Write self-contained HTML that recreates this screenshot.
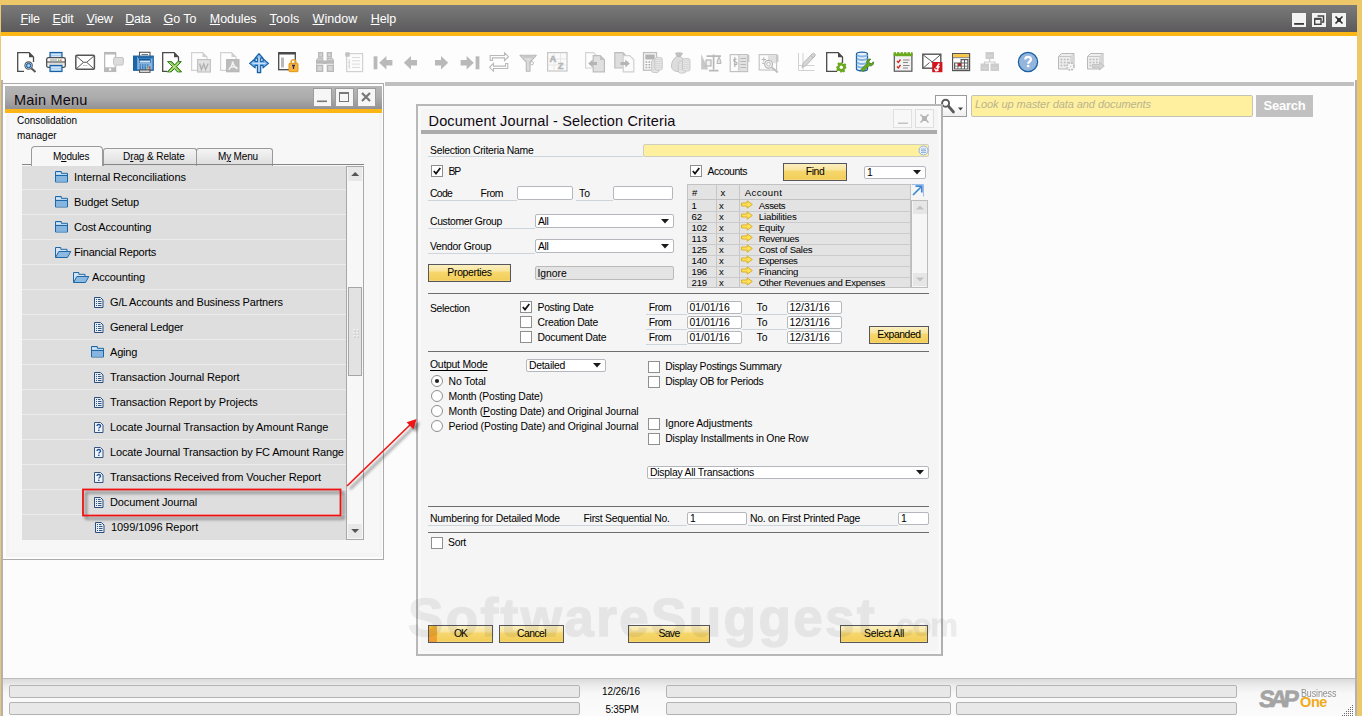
<!DOCTYPE html>
<html lang="en"><head><meta charset="utf-8"><title>SAP Business One - Document Journal</title>
<style>
html,body{margin:0;padding:0;}
body{width:1362px;height:716px;overflow:hidden;background:#fcfcfc;font-family:"Liberation Sans",sans-serif;}
#app{position:relative;width:1362px;height:716px;overflow:hidden;background:#fcfcfc;}
#app div,#app span.t,#app svg{position:absolute;box-sizing:border-box;}
span.t{white-space:nowrap;color:#000;}
u{text-decoration:underline;text-underline-offset:1px;}
.btn{border:1px solid #56565c;background:linear-gradient(#fbefc2 0%,#f9e59c 36%,#f6d76e 46%,#f3ce5a 92%,#f7dc84 100%);}
.inp{border:1px solid #b4b8bc;background:#fff;border-radius:2px;}
.cb{border:1px solid #8e8f8f;background:#fff;}
.rd{border:1px solid #8e8f8f;background:#fff;border-radius:50%;}
.sf{border:1px solid #b4b4b4;background:#e8e8e8;border-radius:2px;}
.ul{height:1px;background:#ccd4dc;}
.sep{height:1px;background:#6e6e6e;}

</style></head>
<body>
<div id="app">
<!-- application frame -->
<div style="left:0px;top:0px;width:1362px;height:716px;background:#edc768;"></div>
<div style="left:1px;top:5px;width:1356px;height:711px;background:#fcfcfc;"></div>
<div style="left:1px;top:5px;width:1356px;height:27px;background:linear-gradient(#7a7a7a 0%,#6c6c6c 45%,#5c5a5c 100%);"></div>
<div style="left:1px;top:32px;width:1356px;height:4px;background:#fdb714;"></div>
<span class="t" style="left:20.50px;top:11.00px;font-size:12.5px;line-height:16px;letter-spacing:-0.239px;color:#fff;"><u>F</u>ile</span>
<span class="t" style="left:52.50px;top:11.00px;font-size:12.5px;line-height:16px;letter-spacing:-0.137px;color:#fff;"><u>E</u>dit</span>
<span class="t" style="left:86.50px;top:11.00px;font-size:12.5px;line-height:16px;letter-spacing:-0.223px;color:#fff;"><u>V</u>iew</span>
<span class="t" style="left:125.30px;top:11.00px;font-size:12.5px;line-height:16px;letter-spacing:-0.255px;color:#fff;"><u>D</u>ata</span>
<span class="t" style="left:163.50px;top:11.00px;font-size:12.5px;line-height:16px;letter-spacing:-0.068px;color:#fff;"><u>G</u>o To</span>
<span class="t" style="left:209.80px;top:11.00px;font-size:12.5px;line-height:16px;letter-spacing:-0.081px;color:#fff;"><u>M</u>odules</span>
<span class="t" style="left:269.50px;top:11.00px;font-size:12.5px;line-height:16px;letter-spacing:0.163px;color:#fff;"><u>T</u>ools</span>
<span class="t" style="left:312.50px;top:11.00px;font-size:12.5px;line-height:16px;letter-spacing:0.086px;color:#fff;"><u>W</u>indow</span>
<span class="t" style="left:370.70px;top:11.00px;font-size:12.5px;line-height:16px;letter-spacing:-0.080px;color:#fff;"><u>H</u>elp</span>
<div style="left:1292px;top:13px;width:14px;height:14px;background:#f3f3f3;"><svg width="14" height="14" viewBox="0 0 14 14"><rect x="2.200" y="10" width="9.800" height="1.800" fill="#3a3a3a"/></svg></div>
<div style="left:1312px;top:13px;width:14px;height:14px;background:#f3f3f3;"><svg width="14" height="14" viewBox="0 0 14 14"><path d="M5.500 3h6v6h-1.800" fill="none" stroke="#444" stroke-width="1.500"/><rect x="2.700" y="5.800" width="6.300" height="5.500" fill="#f4f4f4" stroke="#444" stroke-width="1.400"/><path d="M2.700 5.800h6.300" stroke="#444" stroke-width="2"/></svg></div>
<div style="left:1332px;top:13px;width:14px;height:14px;background:#f3f3f3;"><svg width="14" height="14" viewBox="0 0 14 14"><path d="M3.500 3.500l7 7M10.500 3.500l-7 7" stroke="#333" stroke-width="1.700"/><rect x="5" y="5" width="4" height="4" fill="#333"/></svg></div>
<div style="left:1px;top:36px;width:1356px;height:46px;background:#fdfdfd;"></div>
<div style="left:385px;top:82px;width:969px;height:4px;background:#c0c0c0;"></div>
<div style="left:1355px;top:80px;width:2px;height:636px;background:#b2b2b6;"></div>
<div style="left:1px;top:80px;width:2.2px;height:636px;background:#b2b2b6;"></div>
<svg style="left:17px;top:51px" width="22" height="22" viewBox="0 0 22 22"><path d="M7 20.3H.7V1.7h11.5l4.3 4.3v5" fill="#fff" stroke="#4a4a4a" stroke-width="1.3"/><path d="M12 1.5l4.7 4.7h-4.7z" fill="#4a4a4a"/><path d="M14.3 17.3l4.2 3.6" stroke="#555" stroke-width="2"/><circle cx="11.6" cy="14.6" r="3.7" fill="#dbe9f8" stroke="#555" stroke-width="1.1"/><circle cx="11.6" cy="14.6" r="2.3" fill="#5b9bd8" stroke="#1a5fa8" stroke-width="1"/><rect x="10.6" y="13.6" width="2" height="2" fill="#cfe2f5"/></svg>
<svg style="left:46px;top:51px" width="22" height="22" viewBox="0 0 22 22"><rect x="4" y="1.5" width="12" height="6" fill="#a9cdee" stroke="#1b62a4" stroke-width="1.2"/><path d="M5.5 3.5h9M5.5 5.5h9" stroke="#d5e6f6"/><rect x=".7" y="6.7" width="18.6" height="9.6" rx="1.5" fill="#fbfbfb" stroke="#4d4d4d" stroke-width="1.3"/><path d="M1 11h18" stroke="#555" stroke-width="1.2"/><path d="M4 9h7" stroke="#999"/><rect x="12" y="8.5" width="1.3" height="1.3" fill="#4caf2a"/><rect x="14.2" y="8.5" width="1.3" height="1.3" fill="#e53222"/><path d="M2.5 13h15" stroke="#bbb"/><rect x="4" y="14.5" width="12" height="6" fill="#a9cdee" stroke="#1b62a4" stroke-width="1.2"/><path d="M5.5 16.5h9M5.5 18.5h9" stroke="#d5e6f6"/></svg>
<svg style="left:75px;top:51px" width="22" height="22" viewBox="0 0 22 22"><rect x=".8" y="4.3" width="18.6" height="14" rx="1" fill="#fff" stroke="#555" stroke-width="1.5"/><path d="M1.3 5l7.2 6.3h3.2L18.9 5M1.3 17.8l7.2-6.5M18.9 17.8l-7.2-6.5" fill="none" stroke="#555" stroke-width="1"/><path d="M8 14.5h4.5" stroke="#ccc"/></svg>
<svg style="left:104px;top:51px" width="22" height="22" viewBox="0 0 22 22"><rect x=".6" y="1.6" width="11" height="18.8" fill="#fff" stroke="#b9b9b9" stroke-width="1.3"/><rect x=".6" y="1.2" width="11" height="2.3" fill="#b9b9b9"/><rect x=".6" y="16.3" width="11" height="4.2" fill="#b9b9b9"/><rect x="5" y="17.5" width="2.2" height="2" fill="#fff"/><rect x="9.6" y="6.5" width="9.8" height="7.6" rx="1.5" fill="#dcdcdc" stroke="#c4c4c4" stroke-width="1"/><path d="M10 13.5v3.2l3-3" fill="#dcdcdc"/></svg>
<svg style="left:133px;top:51px" width="22" height="22" viewBox="0 0 22 22"><rect x="6.5" y="1.3" width="10.5" height="5" fill="#fff" stroke="#555" stroke-width="1.1"/><path d="M8.5 3.5h6.5" stroke="#777"/><rect x=".6" y="5.2" width="19.6" height="14" fill="#86b4e0" stroke="#19609f" stroke-width="1.3"/><rect x=".6" y="5.2" width="3.6" height="14" fill="#1f66a6"/><rect x="5" y="5.8" width="14.6" height="1.6" fill="#1f66a6"/><rect x="6" y="7.6" width="11.6" height="4.4" fill="#135a9c"/><rect x="6.6" y="9.6" width="10.4" height="2" fill="#d8e8f8"/><path d="M6.5 14h1.4M9 14h1.4M11.5 14h1.4M14 14h1.4M6.5 16.2h1.4M9 16.2h1.4M11.5 16.2h1.4M6.5 18.2h1.4M9 18.2h1.4M11.5 18.2h1.4" stroke="#1a5da0" stroke-width="1.2"/><rect x="14" y="15.6" width="1.4" height="1.3" fill="#56b02c"/><rect x="16" y="15.6" width="1.4" height="1.3" fill="#e42a1c"/><rect x="16" y="17.6" width="1.4" height="1.3" fill="#e42a1c"/><rect x="14" y="17.6" width="1.4" height="1.3" fill="#f2c230"/><rect x="6.5" y="19" width="10.5" height="2.3" fill="#fff" stroke="#555" stroke-width="1.1"/></svg>
<svg style="left:162px;top:51px" width="22" height="22" viewBox="0 0 22 22"><path d="M5 20.3H.7V1.7h11.5l4.3 4.3v4" fill="#fff" stroke="#4a4a4a" stroke-width="1.3"/><path d="M12 1.5l4.7 4.7h-4.7z" fill="#4a4a4a"/><path d="M5.5 10.6h4.2l3 3.3 3-3.3h3.6l-4.7 5 5 5.3h-4.2l-3-3.4-3.2 3.4H5.3l5.2-5.4z" fill="#7fbf3f" stroke="#2f7d1e" stroke-width="1"/><path d="M7.5 11.5l9.5 9M17 11.5l-9.5 9" stroke="#d8efb8" stroke-width=".9"/></svg>
<svg style="left:191px;top:51px" width="22" height="22" viewBox="0 0 22 22"><path d="M.6 1.6h11l4.4 4.4v13.4H.6z" fill="#fdfdfd" stroke="#d2d2d2" stroke-width="1.2"/><path d="M11.5 1.5l4.6 4.6h-4.6z" fill="#cfcfcf"/><rect x="6.6" y="8.6" width="12.8" height="12.4" fill="#e3e3e3" stroke="#c3c3c3" stroke-width="1.2"/><path d="M8.6 12.5l1.8 6 2.4-5.5 1.8 5.5 2.6-6" fill="none" stroke="#b3b3b3" stroke-width="1.5"/></svg>
<svg style="left:220px;top:51px" width="22" height="22" viewBox="0 0 22 22"><path d="M.6 1.6h11l4.4 4.4v13.4H.6z" fill="#fdfdfd" stroke="#d2d2d2" stroke-width="1.2"/><path d="M11.5 1.5l4.6 4.6h-4.6z" fill="#cfcfcf"/><rect x="6.6" y="8.6" width="12.4" height="12.2" fill="#bcbcbc" stroke="#b4b4b4" stroke-width="1"/><path d="M12.6 10.5c.8 3.5 2 6 5 7.4M12.6 10.5c-.3 3.6-1.6 6.4-4 8.2M9.5 16.6c2.600-1 5.500-1 7.800.2" fill="none" stroke="#f3f3f3" stroke-width="1.4"/></svg>
<svg style="left:249px;top:51.5px" width="22" height="22" viewBox="0 0 22 22"><path d="M10 1.6l4 4.6h-2.300v3.300h2.300V6.800l5.500 4.600-5.500 4.500v-2.600h-2.300v7.300H8.400v-7.300H6.100v2.600L.6 11.400l5.500-4.600v2.700h2.300V6.200H6z" fill="#7db5e8" stroke="#1660a8" stroke-width="1.2" stroke-linejoin="round"/><path d="M10 4.500v15M3.500 11.400h13" stroke="#cfe4f8" stroke-width="1"/></svg>
<svg style="left:278px;top:51px" width="22" height="22" viewBox="0 0 22 22"><rect x=".7" y="1.700" width="16.600" height="17" fill="#fff" stroke="#4a4a4a" stroke-width="1.300"/><rect x=".7" y="1.100" width="16.600" height="2.400" fill="#4a4a4a"/><rect x="3" y="6.500" width="3" height="10" fill="#b9b9b9"/><path d="M13.200 12.500v-2c0-2.400 4.600-2.400 4.600 0v2" fill="none" stroke="#e8a020" stroke-width="1.500"/><rect x="11" y="12.300" width="9" height="8.400" rx=".8" fill="#f6b53c" stroke="#e29512" stroke-width="1"/><path d="M14 14.500h3M15.500 14.500v3.500" stroke="#2a2a6a" stroke-width="1.300"/></svg>
<svg style="left:315px;top:51px" width="22" height="22" viewBox="0 0 22 22"><path d="M3 1h5.300v5.500h-5.300zM11.700 1h5.300v5.500h-5.300z" fill="#b9b9b9"/><path d="M4.300 2.300h2.700v3h-2.700zM13 2.300h2.700v3h-2.700z" fill="#d2d2d2"/><path d="M1 21v-12l2-2.500h5.300v3h3.400v-3h5.300l2 2.500v12h-7.300v-8h-3.400v8z" fill="#b9b9b9"/><path d="M1.500 13.300h6.500M12 13.300h6.500" stroke="#f2f2f2" stroke-width="1.100"/><path d="M2.500 15h4.300v4.700h-4.300zM13.200 15h4.300v4.700h-4.300z" fill="#d6d6d6"/><path d="M2.300 8.500h5M12.700 8.500h5" stroke="#d0d0d0" stroke-width="1.500"/></svg>
<svg style="left:344px;top:51px" width="22" height="22" viewBox="0 0 22 22"><rect x="2.600" y="2.600" width="16" height="18" fill="#fcfcfc" stroke="#d2d2d2" stroke-width="1.200"/><rect x="1.200" y="1.200" width="4.600" height="4.600" rx="1" fill="#c2c2c2"/><path d="M8 6.500h8M8 9.800h8M8 13.100h8M8 16.400h8" stroke="#dadada" stroke-width="1"/><path d="M5.200 8v10" stroke="#d6d6d6" stroke-width="1"/><path d="M4.500 11.500h1.500M4.500 15h1.500" stroke="#cfcfcf"/></svg>
<svg style="left:373px;top:51.7px" width="22" height="22" viewBox="0 0 22 22"><rect x=".6" y="4.300" width="3.800" height="13" fill="#b9b9b9"/><path d="M6.200 10.800l7.200-6.800v4h6v5.600h-6v4z" fill="#b9b9b9"/></svg>
<svg style="left:402px;top:51.7px" width="22" height="22" viewBox="0 0 22 22"><path d="M1.800 10.800l7.200-6.800v4h6v5.600h-6v4z" fill="#b9b9b9"/></svg>
<svg style="left:431px;top:51.7px" width="22" height="22" viewBox="0 0 22 22"><path d="M17.200 10.800l-7.200-6.800v4h-6v5.600h6v4z" fill="#b9b9b9"/></svg>
<svg style="left:460px;top:51.7px" width="22" height="22" viewBox="0 0 22 22"><rect x="15.600" y="4.300" width="3.800" height="13" fill="#b9b9b9"/><path d="M13.800 10.800l-7.200-6.800v4h-6v5.600h6v4z" fill="#b9b9b9"/></svg>
<svg style="left:489px;top:51px" width="22" height="22" viewBox="0 0 22 22"><path d="M1.200 9.500v-5h14.300V1.800l4 3.900-4 3.900V6.900H3.400v2.600zM18.800 12.500v5H4.500v2.700l-4-3.900 4-3.900v2.700h12.100v-2.600z" fill="#fdfdfd" stroke="#b9b9b9" stroke-width="1.100"/></svg>
<svg style="left:518px;top:51px" width="22" height="22" viewBox="0 0 22 22"><path d="M2 4.300h16.300l-6.300 6.700v9.300h-3.700v-9.300z" fill="#dcdcdc" stroke="#b9b9b9" stroke-width="1.100" stroke-linejoin="round"/><path d="M4.500 5.200h11.300l-1.500 1.600h-8.300z" fill="#c2c2c2"/><circle cx="13.800" cy="12.200" r="1.600" fill="#fff" stroke="#b9b9b9"/></svg>
<svg style="left:547px;top:51px" width="22" height="22" viewBox="0 0 22 22"><rect x=".6" y="1.600" width="19.400" height="18.400" fill="#fafafa" stroke="#c6c6c6" stroke-width="1.200"/><path d="M1 8h18.500M1 14h18.500M7 2v17.500M13.500 2v17.500" stroke="#e6e6e6"/><text x="2.600" y="10.800" font-family="Liberation Sans, sans-serif" font-size="9.500" font-weight="bold" fill="#b6b6b6" stroke="#b6b6b6" stroke-width=".5">A</text><text x="10.800" y="18.200" font-family="Liberation Sans, sans-serif" font-size="9.500" font-weight="bold" fill="#b6b6b6" stroke="#b6b6b6" stroke-width=".5">Z</text></svg>
<svg style="left:584.7px;top:51px" width="22" height="22" viewBox="0 0 22 22"><path d="M.6 1.600h8l3.400 3.400v12H.6z" fill="#fdfdfd" stroke="#d4d4d4" stroke-width="1.200"/><path d="M8.200 4.600h7l4.200 4.200v12H8.200z" fill="#e0e0e0" stroke="#bdbdbd" stroke-width="1.200"/><path d="M15 4.500l4.500 4.500H15z" fill="#c2c2c2"/><path d="M3.200 12.500l4.500-4v2.600h4.300v2.800H7.700v2.600z" fill="#b4b4b4"/></svg>
<svg style="left:613.5px;top:51px" width="22" height="22" viewBox="0 0 22 22"><path d="M.8 1.600h8l3.400 3.400v12H.8z" fill="#dedede" stroke="#bdbdbd" stroke-width="1.200"/><path d="M8.800 1.500l3.500 3.500H8.800z" fill="#bdbdbd"/><path d="M9.200 4.600h6.600l4 4.200v12H9.200z" fill="#fbfbfb" stroke="#d0d0d0" stroke-width="1.200"/><path d="M15.800 12.500l-4.500-4v2.600H6.500v2.800h4.800v2.600z" fill="#b4b4b4"/></svg>
<svg style="left:642px;top:51px" width="22" height="22" viewBox="0 0 22 22"><rect x="1.500" y="1.600" width="13" height="17.600" fill="#fbfbfb" stroke="#bdbdbd" stroke-width="1.300"/><rect x="3.300" y="3.500" width="9.400" height="5" fill="#b4b4b4"/><path d="M3.500 11h1.800M6.500 11h1.800M3.500 13.700h1.800M6.500 13.700h1.800M3.500 16.400h1.800M6.500 16.400h1.800" stroke="#a8a8a8" stroke-width="1.500"/><rect x="9.5" y="9" width="7.500" height="12.5" rx="2" fill="#e6e6e6" stroke="#c6c6c6" stroke-width=".9"/><path d="M10 11h6.500M10 13h6.500M10 15h6.500M10 17h6.500M10 19h6.500" stroke="#d0d0d0" stroke-width=".7"/><rect x="12.8" y="6.5" width="7.500" height="12.5" rx="2" fill="#e6e6e6" stroke="#c6c6c6" stroke-width=".9"/><path d="M13.3 8.5h6.500M13.3 10.5h6.500M13.3 12.5h6.500M13.3 14.5h6.500M13.3 16.5h6.500" stroke="#d0d0d0" stroke-width=".7"/></svg>
<svg style="left:671px;top:51.5px" width="22" height="22" viewBox="0 0 22 22"><path d="M5.500 4.500c-3 2-5 5.500-5 9.500 0 4 3 5.500 7 5.500s6.500-1.500 6.500-5.500c0-4-1.500-7.500-4.500-9.500z" fill="#dcdcdc" stroke="#c4c4c4"/><path d="M4.500 1.300c2-.8 5-.8 7 0l-1.800 3h-3.600z" fill="#c2c2c2" stroke="#b6b6b6" stroke-width=".8"/><rect x="7.3" y="9.5" width="7.500" height="11.5" rx="2" fill="#e6e6e6" stroke="#c6c6c6" stroke-width=".9"/><path d="M7.8 11.5h6.500M7.8 13.5h6.500M7.8 15.5h6.500M7.8 17.5h6.500" stroke="#d0d0d0" stroke-width=".7"/><rect x="11.5" y="6.5" width="7.500" height="12.5" rx="2" fill="#e6e6e6" stroke="#c6c6c6" stroke-width=".9"/><path d="M12 8.5h6.500M12 10.5h6.500M12 12.5h6.500M12 14.5h6.500M12 16.5h6.500" stroke="#d0d0d0" stroke-width=".7"/></svg>
<svg style="left:700px;top:51px" width="22" height="22" viewBox="0 0 22 22"><path d="M1.200 3v15.600h7z" fill="#c8c8c8"/><path d="M13.600 3.500v15M9 19.600h9.500M6.500 5.200h14.500" stroke="#b9b9b9" stroke-width="1.700"/><rect x="6" y="9" width="5" height="6" fill="#f2f2f2" stroke="#b9b9b9" stroke-width="1.300"/><path d="M17.200 10.500l1.300-3.500h1l1.300 3.500v2h-3.600z" fill="#e4e4e4" stroke="#b9b9b9" stroke-width="1.100"/><path d="M19 5.500v2" stroke="#b9b9b9"/></svg>
<svg style="left:729px;top:51px" width="22" height="22" viewBox="0 0 22 22"><rect x="1.200" y="3.600" width="17.400" height="17" fill="#fbfbfb" stroke="#c2c2c2" stroke-width="1.200"/><rect x="10" y="4.200" width="8" height="15.800" fill="#e2e2e2"/><rect x="18.600" y="4" width="1.800" height="7" fill="#c8c8c8"/><path d="M9.800 4v16" stroke="#c4c4c4"/><path d="M11.500 7.500h5.500M11.500 10.500h5.500M11.500 13.500h5.500M11.500 16.500h5.500" stroke="#b8b8b8" stroke-width="1.200"/><path d="M7.600 8.300c-3.200-1.400-3.800 1.800-1.200 2.500 2.600.7 2.100 3.700-1.500 2.500M5.800 6v10" fill="none" stroke="#b0b0b0" stroke-width="1.100"/></svg>
<svg style="left:758px;top:51px" width="22" height="22" viewBox="0 0 22 22"><rect x="1.200" y="3.600" width="17.400" height="15.400" fill="#fbfbfb" stroke="#c6c6c6" stroke-width="1.200"/><rect x="10" y="4.200" width="8" height="8" fill="#e0e0e0"/><rect x="18.600" y="4" width="1.800" height="7" fill="#c8c8c8"/><path d="M3.500 8.500h4.500M5.800 6.300v4.500M4 12.300h2.500" stroke="#b8b8b8" stroke-width="1"/><circle cx="10.600" cy="13.200" r="3.900" fill="#f4f4f4" stroke="#b8b8b8" stroke-width="1.200"/><circle cx="10.600" cy="13.200" r="1.900" fill="none" stroke="#c0c0c0"/><path d="M13.600 16.300l6.300 5.200" stroke="#bebebe" stroke-width="1.900"/></svg>
<svg style="left:797px;top:51px" width="22" height="22" viewBox="0 0 22 22"><path d="M1.500 2v17.500h16M6 2v17M1.500 14.500h16" fill="none" stroke="#d2d2d2" stroke-width="1"/><path d="M5 16.500l1.500-4.500 9-9.500c1.500-1 3.500 1 2.500 2.500l-9 9.500z" fill="#d6d6d6" stroke="#b8b8b8" stroke-width="1"/><path d="M14 4.500l2.500 2.500" stroke="#b0b0b0"/></svg>
<svg style="left:826px;top:51px" width="22" height="22" viewBox="0 0 22 22"><path d="M11 20.300H.7V1.700h11.500l4.300 4.300v6" fill="#fff" stroke="#4a4a4a" stroke-width="1.300"/><path d="M12 1.500l4.700 4.700h-4.700z" fill="#4a4a4a"/><g transform="translate(15.300,16.300)"><path d="M-1-5h2l.3 1.300 1.200.5 1.200-.8 1.400 1.400-.8 1.200.5 1.200L5-.9v2l-1.300.3-.5 1.200.8 1.200-1.400 1.400-1.200-.8-1.200.5L1 5.200h-2l-.3-1.300-1.200-.5-1.200.8-1.400-1.400.8-1.200-.5-1.200L-5 1.100v-2l1.300-.3.500-1.200-.8-1.200 1.400-1.400 1.200.8 1.200-.5z" fill="#6aa820"/><circle r="1.700" fill="#fff"/></g></svg>
<svg style="left:855px;top:51px" width="22" height="22" viewBox="0 0 22 22"><path d="M1.500 3c0-2.600 11-2.600 11 0v15c0 2.600-11 2.600-11 0z" fill="#e9f2fb" stroke="#1b62a4" stroke-width="1.300"/><path d="M2 4c2 2 8 2 10.500 0M2 7.500c2 2 8 2 10.500 0M2 11.500c2 2 8 2 10.500 0M2 15c2 2 8 2 10.500 0" fill="none" stroke="#86b4e0" stroke-width="1.800"/><path d="M6 18.500l6-6c-1-2.500 1-5 3.800-4.300l-2 2 .6 2 2 .6 2-2c.7 2.800-1.800 4.800-4.300 3.800l-6 6z" fill="#6aa820" stroke="#3c7d14" stroke-width=".9"/></svg>
<svg style="left:893px;top:51px" width="22" height="22" viewBox="0 0 22 22"><rect x="1.300" y="2.600" width="17.600" height="17.600" fill="#f2f2f2" stroke="#555" stroke-width="1.200"/><path d="M.7 1.200h18.800v4H.7z" fill="#6aa820"/><path d="M3.500 1v1.500M7 1v1.500M10.500 1v1.500M14 1v1.500M17.500 1v1.500" stroke="#fff" stroke-width="1"/><path d="M4 10l1.300 1.500 2.200-3M4 15.500l1.300 1.500 2.200-3" fill="none" stroke="#d4281c" stroke-width="1.300"/><path d="M10 9h6.500M10 11.500h5M10 14.500h6.500M10 17h5" stroke="#888" stroke-width="1.100"/></svg>
<svg style="left:922px;top:51px" width="22" height="22" viewBox="0 0 22 22"><rect x=".8" y="3.200" width="18" height="14" fill="#fff" stroke="#555" stroke-width="1.400"/><path d="M1.300 4l16.800 13M18.200 4L9.500 11.500M1.300 17l6.200-5.500" fill="none" stroke="#555" stroke-width="1"/><rect x="10.200" y="11" width="10.200" height="10.200" fill="#d0161c"/><path d="M17.300 12.500l-2.500 3.500h2l-2.500 3.800M12.500 17.500l1.500 2.500 2.500-1" fill="none" stroke="#fff" stroke-width="1.400"/></svg>
<svg style="left:951px;top:51px" width="22" height="22" viewBox="0 0 22 22"><rect x="1.600" y="2.600" width="17" height="17" fill="#fff" stroke="#555" stroke-width="1.200"/><rect x="2.200" y="3.200" width="15.800" height="3" fill="#f8c540"/><path d="M2 6.700h16.200" stroke="#666" stroke-width=".8"/><path d="M9.500 8h8v10.500h-14.500v-7h6.500z" fill="#5a5a5a"/><path d="M10.700 9.200h2.300v2.300h-2.300zM14 9.200h2.300v2.300h-2.300zM4.200 12.500h2.300v2.200h-2.300zM10.700 12.500h2.300v2.200h-2.300zM14 12.500h2.300v2.200h-2.300zM4.200 15.600h2.300v2h-2.300zM7.400 15.600h2.300v2h-2.300zM10.700 15.600h2.300v2h-2.300zM14 15.600h2.300v2h-2.300z" fill="#fff"/><rect x="7.200" y="12.400" width="2.900" height="2.300" fill="#d0161c"/></svg>
<svg style="left:980px;top:51px" width="22" height="22" viewBox="0 0 22 22"><rect x="5.500" y="1" width="8.500" height="7" fill="#cdcdcd"/><path d="M9.700 8v3M4.500 14v-3h10.500v3" fill="none" stroke="#cdcdcd" stroke-width="1.200"/><rect x=".5" y="12.500" width="8.500" height="7.500" fill="#cdcdcd"/><rect x="10.500" y="12.500" width="8.500" height="7.500" fill="#cdcdcd"/><path d="M2.500 17h4.500M12.500 17h4.500M7.500 5h4.500" stroke="#dcdcdc"/></svg>
<svg style="left:1017px;top:51px" width="22" height="22" viewBox="0 0 22 22"><circle cx="11" cy="11" r="9.600" fill="#94b5dc" stroke="#1b62a4" stroke-width="1.300"/><path d="M8.300 8.600c0-3.600 5.600-3.600 5.600-.2 0 2.300-2.700 2.300-2.700 4.400" fill="none" stroke="#fff" stroke-width="2.300"/><rect x="9.900" y="13.900" width="2.500" height="2.300" fill="#fff"/></svg>
<svg style="left:1057px;top:51px" width="22" height="22" viewBox="0 0 22 22"><path d="M1.500 5.500l3-3h12.500v12.500l-3 3h-12.500z" fill="#ededed" stroke="#b9b9b9" stroke-width="1"/><path d="M1.500 5.500h12.500v12.500M14 5.500l3-3" fill="none" stroke="#c6c6c6"/><path d="M14.300 5.800l2.500-2.500v11.500l-2.500 2.500z" fill="#d6d6d6"/><path d="M3.500 8.500h1.800M6.800 8.500h1.800M10 8.500h1.800M3.500 11.500h1.800M6.800 11.500h1.800M10 11.500h1.800M3.500 14.500h1.800M6.800 14.500h1.800" stroke="#bcbcbc" stroke-width="1.300"/><g transform="translate(13.500,15.500)"><circle r="3.400" fill="#fff" stroke="#bdbdbd" stroke-width="1.900" stroke-dasharray="1.700 1"/><circle r="1.200" fill="#ddd"/></g></svg>
<svg style="left:1086px;top:51px" width="22" height="22" viewBox="0 0 22 22"><path d="M1.500 5.500l3-3h12.500v12.500l-3 3h-12.500z" fill="#ededed" stroke="#b9b9b9" stroke-width="1"/><path d="M1.500 5.500h12.500v12.500M14 5.500l3-3" fill="none" stroke="#c6c6c6"/><path d="M14.300 5.800l2.500-2.500v11.500l-2.500 2.500z" fill="#d6d6d6"/><path d="M3.500 8.500h1.800M6.800 8.500h1.800M10 8.500h1.800M3.500 11.500h1.800M6.800 11.500h1.800M10 11.500h1.800M3.500 14.500h1.800M6.800 14.500h1.800" stroke="#bcbcbc" stroke-width="1.300"/><path d="M6.500 13.500h7v-2.300l4.800 3.900-4.800 3.900v-2.300h-7z" fill="#d2d2d2" stroke="#bdbdbd" stroke-width=".8"/></svg>
<div style="left:935px;top:95px;width:32px;height:22px;background:linear-gradient(#ffffff 40%,#efefef);border:1px solid #9a9a9a;"><svg width="30" height="20" viewBox="0 0 30 20"><circle cx="9.600" cy="7.200" r="3.500" fill="none" stroke="#5a5a5a" stroke-width="1.900"/><path d="M12.300 10l5.200 6" stroke="#5a5a5a" stroke-width="2.700" stroke-linecap="round"/><path d="M22 11.500h5l-2.500 3z" fill="#444"/></svg></div>
<div style="left:971px;top:95px;width:282px;height:22px;background:#fff0a0;border:1px solid #c4c4b4;border-radius:2px;"></div>
<span class="t" style="left:975.00px;top:97.00px;font-size:11px;line-height:14px;letter-spacing:-0.078px;color:#b9b48c;font-style:italic;">Look up master data and documents</span>
<div style="left:1256px;top:95px;width:57px;height:22px;background:#c1c1c1;"></div>
<span class="t" style="left:1263.50px;top:97.00px;font-size:13px;line-height:17px;letter-spacing:-0.229px;color:#fff;font-weight:bold;">Search</span>
<!-- Main Menu -->
<div style="left:3.2px;top:82.5px;width:381.3px;height:477px;background:#fdfdfd;border:1.4px solid #ababab;border-left:none;"></div>
<div style="left:6px;top:86px;width:376px;height:470.5px;background:#f4f4f4;"></div>
<div style="left:9px;top:113px;width:370px;height:439.5px;background:#f7f7f7;"></div>
<div style="left:5px;top:86px;width:377px;height:23px;background:linear-gradient(#b6b6b6 0%,#acacac 50%,#929296 100%);"></div>
<div style="left:5px;top:109px;width:377px;height:4px;background:#fbb515;"></div>
<span class="t" style="left:14.00px;top:91.00px;font-size:14.5px;line-height:19px;letter-spacing:0.196px;color:#100810;">Main Menu</span>
<div style="left:313px;top:88px;width:19px;height:19px;background:#f6f6f6;border:1px solid #9c9c9c;"><svg width="16" height="16" viewBox="0 0 16 16"><rect x="3" y="11.5" width="10" height="1.6" fill="#777"/></svg></div>
<div style="left:335px;top:88px;width:19px;height:19px;background:#f6f6f6;border:1px solid #9c9c9c;"><svg width="16" height="16" viewBox="0 0 16 16"><rect x="3.5" y="3.5" width="9" height="9" fill="none" stroke="#777"/><rect x="3" y="3" width="10" height="2" fill="#777"/></svg></div>
<div style="left:357px;top:88px;width:19px;height:19px;background:#f6f6f6;border:1px solid #9c9c9c;"><svg width="16" height="16" viewBox="0 0 16 16"><path d="M4 4l8 8M12 4l-8 8" stroke="#777" stroke-width="2.2"/></svg></div>
<span class="t" style="left:17.00px;top:114.00px;font-size:10px;line-height:13px;letter-spacing:-0.045px;">Consolidation</span>
<span class="t" style="left:17.00px;top:129.00px;font-size:10px;line-height:13px;letter-spacing:0.024px;">manager</span>
<div style="left:102.5px;top:148px;width:94.5px;height:18px;background:linear-gradient(#f4f4f4,#dcdcdc);border:1px solid #9a9a9a;border-bottom:none;border-radius:3px 3px 0 0;"></div>
<div style="left:196px;top:148px;width:77px;height:18px;background:linear-gradient(#f4f4f4,#dcdcdc);border:1px solid #9a9a9a;border-bottom:none;border-radius:3px 3px 0 0;"></div>
<div style="left:22px;top:164px;width:342px;height:1px;background:#868686;"></div>
<div style="left:31px;top:146px;width:72px;height:20px;background:#f7f7f7;border:1px solid #9a9a9a;border-bottom:none;border-radius:4px 4px 0 0;"></div>
<span class="t" style="left:53.00px;top:150.00px;font-size:10px;line-height:13px;letter-spacing:-0.225px;">M<u>o</u>dules</span>
<span class="t" style="left:123.00px;top:150.00px;font-size:10px;line-height:13px;letter-spacing:-0.084px;">D<u>r</u>ag &amp; Relate</span>
<span class="t" style="left:218.00px;top:150.00px;font-size:10px;line-height:13px;letter-spacing:-0.176px;">M<u>y</u> Menu</span>
<div style="left:22px;top:165.5px;width:325px;height:374.5px;background:#dedede;"></div>
<svg style="left:54.5px;top:171px" width="14" height="12" viewBox="0 0 14 12"><path d="M.5 .5h5.800v1.800h6.200v8.700h-12z" fill="#b9d4ee" stroke="#1f68a6"/><path d="M1 4.500h11" stroke="#1f68a6"/><rect x="1" y="5" width="11" height="5.500" fill="#86b6e0"/><path d="M1 2.500h5" stroke="#d6e6f6"/></svg>
<span class="t" style="left:74.00px;top:170.00px;font-size:11px;line-height:14px;letter-spacing:-0.078px;">Internal Reconciliations</span>
<div style="left:22px;top:189px;width:325px;height:1px;background:#ececec;"></div>
<svg style="left:54.5px;top:196px" width="14" height="12" viewBox="0 0 14 12"><path d="M.5 .5h5.800v1.800h6.200v8.700h-12z" fill="#b9d4ee" stroke="#1f68a6"/><path d="M1 4.500h11" stroke="#1f68a6"/><rect x="1" y="5" width="11" height="5.500" fill="#86b6e0"/><path d="M1 2.500h5" stroke="#d6e6f6"/></svg>
<span class="t" style="left:74.00px;top:195.00px;font-size:11px;line-height:14px;letter-spacing:-0.149px;">Budget Setup</span>
<div style="left:22px;top:214px;width:325px;height:1px;background:#ececec;"></div>
<svg style="left:54.5px;top:221px" width="14" height="12" viewBox="0 0 14 12"><path d="M.5 .5h5.800v1.800h6.200v8.700h-12z" fill="#b9d4ee" stroke="#1f68a6"/><path d="M1 4.500h11" stroke="#1f68a6"/><rect x="1" y="5" width="11" height="5.500" fill="#86b6e0"/><path d="M1 2.500h5" stroke="#d6e6f6"/></svg>
<span class="t" style="left:74.00px;top:220.00px;font-size:11px;line-height:14px;letter-spacing:-0.152px;">Cost Accounting</span>
<div style="left:22px;top:239px;width:325px;height:1px;background:#ececec;"></div>
<svg style="left:54.5px;top:246.5px" width="17" height="12" viewBox="0 0 17 12"><path d="M.5 10.500v-10h5.300v1.800h6.200v2.200" fill="#d4e4f4" stroke="#1f68a6"/><path d="M.6 10.500l3.200-6h12l-3.300 6z" fill="#8cbae2" stroke="#1f68a6" stroke-linejoin="round"/></svg>
<span class="t" style="left:74.00px;top:245.00px;font-size:11px;line-height:14px;letter-spacing:-0.209px;">Financial Reports</span>
<div style="left:22px;top:264px;width:325px;height:1px;background:#ececec;"></div>
<svg style="left:72.5px;top:271.5px" width="17" height="12" viewBox="0 0 17 12"><path d="M.5 10.500v-10h5.300v1.800h6.200v2.200" fill="#d4e4f4" stroke="#1f68a6"/><path d="M.6 10.500l3.200-6h12l-3.300 6z" fill="#8cbae2" stroke="#1f68a6" stroke-linejoin="round"/></svg>
<span class="t" style="left:92.00px;top:270.00px;font-size:11px;line-height:14px;letter-spacing:-0.158px;">Accounting</span>
<div style="left:22px;top:289px;width:325px;height:1px;background:#ececec;"></div>
<svg style="left:93.5px;top:296.5px" width="10" height="11" viewBox="0 0 10 11"><path d="M.5 .5h6l2.500 2.500v7.500h-8.500z" fill="#e6eef8" stroke="#2c4d7a"/><path d="M2 2.500h1M4 2.500h2.500M2 4.500h1M4 4.500h3.500M2 6.500h1M4 6.500h3.500M2 8.500h1M4 8.500h3.500" stroke="#34557f"/></svg>
<span class="t" style="left:110.00px;top:295.00px;font-size:11px;line-height:14px;letter-spacing:-0.176px;">G/L Accounts and Business Partners</span>
<div style="left:22px;top:314px;width:325px;height:1px;background:#ececec;"></div>
<svg style="left:93.5px;top:321.5px" width="10" height="11" viewBox="0 0 10 11"><path d="M.5 .5h6l2.500 2.500v7.500h-8.500z" fill="#e6eef8" stroke="#2c4d7a"/><path d="M2 2.500h1M4 2.500h2.500M2 4.500h1M4 4.500h3.500M2 6.500h1M4 6.500h3.500M2 8.500h1M4 8.500h3.500" stroke="#34557f"/></svg>
<span class="t" style="left:110.00px;top:320.00px;font-size:11px;line-height:14px;letter-spacing:-0.230px;">General Ledger</span>
<div style="left:22px;top:339px;width:325px;height:1px;background:#ececec;"></div>
<svg style="left:90.5px;top:346px" width="14" height="12" viewBox="0 0 14 12"><path d="M.5 .5h5.800v1.800h6.200v8.700h-12z" fill="#b9d4ee" stroke="#1f68a6"/><path d="M1 4.500h11" stroke="#1f68a6"/><rect x="1" y="5" width="11" height="5.500" fill="#86b6e0"/><path d="M1 2.500h5" stroke="#d6e6f6"/></svg>
<span class="t" style="left:110.00px;top:345.00px;font-size:11px;line-height:14px;letter-spacing:-0.202px;">Aging</span>
<div style="left:22px;top:364px;width:325px;height:1px;background:#ececec;"></div>
<svg style="left:93.5px;top:371.5px" width="10" height="11" viewBox="0 0 10 11"><path d="M.5 .5h6l2.500 2.500v7.500h-8.500z" fill="#e6eef8" stroke="#2c4d7a"/><path d="M2 2.500h1M4 2.500h2.500M2 4.500h1M4 4.500h3.500M2 6.500h1M4 6.500h3.500M2 8.500h1M4 8.500h3.500" stroke="#34557f"/></svg>
<span class="t" style="left:110.00px;top:370.00px;font-size:11px;line-height:14px;letter-spacing:-0.111px;">Transaction Journal Report</span>
<div style="left:22px;top:389px;width:325px;height:1px;background:#ececec;"></div>
<svg style="left:93.5px;top:396.5px" width="10" height="11" viewBox="0 0 10 11"><path d="M.5 .5h6l2.500 2.500v7.500h-8.500z" fill="#e6eef8" stroke="#2c4d7a"/><path d="M2 2.500h1M4 2.500h2.500M2 4.500h1M4 4.500h3.500M2 6.500h1M4 6.500h3.500M2 8.500h1M4 8.500h3.500" stroke="#34557f"/></svg>
<span class="t" style="left:110.00px;top:395.00px;font-size:11px;line-height:14px;letter-spacing:-0.097px;">Transaction Report by Projects</span>
<div style="left:22px;top:414px;width:325px;height:1px;background:#ececec;"></div>
<svg style="left:93.5px;top:421.5px" width="10" height="11" viewBox="0 0 10 11"><path d="M.5 .5h6l2.500 2.500v7.500h-8.500z" fill="#eef4fb" stroke="#34557f"/><path d="M3 4c0-2 3.600-2 3.600 0 0 1.300-1.800 1.200-1.800 2.600" fill="none" stroke="#1f4f9a" stroke-width="1.300"/><rect x="4.100" y="7.600" width="1.400" height="1.400" fill="#1f4f9a"/></svg>
<span class="t" style="left:110.00px;top:420.00px;font-size:11px;line-height:14px;letter-spacing:-0.104px;">Locate Journal Transaction by Amount Range</span>
<div style="left:22px;top:439px;width:325px;height:1px;background:#ececec;"></div>
<svg style="left:93.5px;top:446.5px" width="10" height="11" viewBox="0 0 10 11"><path d="M.5 .5h6l2.500 2.500v7.500h-8.500z" fill="#eef4fb" stroke="#34557f"/><path d="M3 4c0-2 3.600-2 3.600 0 0 1.300-1.800 1.200-1.800 2.600" fill="none" stroke="#1f4f9a" stroke-width="1.300"/><rect x="4.100" y="7.600" width="1.400" height="1.400" fill="#1f4f9a"/></svg>
<span class="t" style="left:110.00px;top:445.00px;font-size:11px;line-height:14px;letter-spacing:-0.144px;">Locate Journal Transaction by FC Amount Range</span>
<div style="left:22px;top:464px;width:325px;height:1px;background:#ececec;"></div>
<svg style="left:93.5px;top:471.5px" width="10" height="11" viewBox="0 0 10 11"><path d="M.5 .5h6l2.500 2.500v7.500h-8.500z" fill="#eef4fb" stroke="#34557f"/><path d="M3 4c0-2 3.600-2 3.600 0 0 1.300-1.800 1.200-1.800 2.600" fill="none" stroke="#1f4f9a" stroke-width="1.300"/><rect x="4.100" y="7.600" width="1.400" height="1.400" fill="#1f4f9a"/></svg>
<span class="t" style="left:110.00px;top:470.00px;font-size:11px;line-height:14px;letter-spacing:-0.124px;">Transactions Received from Voucher Report</span>
<div style="left:22px;top:489px;width:325px;height:1px;background:#ececec;"></div>
<svg style="left:93.5px;top:496.5px" width="10" height="11" viewBox="0 0 10 11"><path d="M.5 .5h6l2.500 2.500v7.500h-8.500z" fill="#e6eef8" stroke="#2c4d7a"/><path d="M2 2.500h1M4 2.500h2.500M2 4.500h1M4 4.500h3.500M2 6.500h1M4 6.500h3.500M2 8.500h1M4 8.500h3.500" stroke="#34557f"/></svg>
<span class="t" style="left:110.00px;top:495.00px;font-size:11px;line-height:14px;letter-spacing:-0.134px;">Document Journal</span>
<div style="left:22px;top:514px;width:325px;height:1px;background:#ececec;"></div>
<svg style="left:94.5px;top:521.5px" width="10" height="11" viewBox="0 0 10 11"><path d="M.5 .5h6l2.500 2.500v7.500h-8.500z" fill="#e6eef8" stroke="#2c4d7a"/><path d="M2 2.500h1M4 2.500h2.500M2 4.500h1M4 4.500h3.500M2 6.500h1M4 6.500h3.500M2 8.500h1M4 8.500h3.500" stroke="#34557f"/></svg>
<span class="t" style="left:111.00px;top:520.00px;font-size:11px;line-height:14px;letter-spacing:-0.057px;">1099/1096 Report</span>
<div style="left:346px;top:165.5px;width:17.8px;height:374.5px;background:#f7f7f7;border:1px solid #a8a8a8;"></div>
<div style="left:347.5px;top:167px;width:14.8px;height:14px;background:#e8e8e8;"><svg width="15" height="14" viewBox="0 0 15 14"><path d="M3.2 9l4-4 4 4z" fill="#555"/></svg></div>
<div style="left:347.5px;top:524px;width:14.8px;height:14px;background:#e8e8e8;"><svg width="15" height="14" viewBox="0 0 15 14"><path d="M3.2 5l4 4 4-4z" fill="#555"/></svg></div>
<div style="left:347.5px;top:286.8px;width:14.6px;height:89.6px;background:#e2e2e2;border:1px solid #a6a6a6;"><svg style="left:3px;top:41px" width="8" height="10" viewBox="0 0 8 10"><path d="M1.500 1h1.500M5 1h1.500M1.500 4h1.500M5 4h1.500M1.500 7h1.500M5 7h1.500" stroke="#fafafa" stroke-width="1.500"/><path d="M2 2h1.500M5.500 2h1.500M2 5h1.500M5.500 5h1.500M2 8h1.500M5.500 8h1.500" stroke="#b4b4b4" stroke-width=".8"/></svg></div>
<!-- Document Journal dialog -->
<div style="left:416px;top:104px;width:527px;height:552px;background:#f5f5f5;border:2px solid #b8b8b8;border-right-color:#b0b0b0;box-shadow:inset 0 0 0 3px #f9f9f9;"></div>
<span class="t" style="left:428.50px;top:112.00px;font-size:14.5px;line-height:19px;letter-spacing:0.163px;color:#100810;">Document Journal - Selection Criteria</span>
<div style="left:421px;top:130px;width:516px;height:4px;background:#ababab;"></div>
<div style="left:893px;top:109px;width:19px;height:19px;background:#f8f8f8;border:1px solid #e0e0e0;"><svg width="17" height="17" viewBox="0 0 17 17"><rect x="4" y="12.500" width="10" height="1.500" fill="#c4c4c4"/></svg></div>
<div style="left:915px;top:109px;width:19px;height:19px;background:#f8f8f8;border:1px solid #dedede;"><svg width="17" height="17" viewBox="0 0 17 17"><path d="M4.500 4.500l8 8M12.500 4.500l-8 8" stroke="#b4b4b4" stroke-width="1.600"/><rect x="6" y="6" width="5" height="5" fill="#b4b4b4"/></svg></div>
<span class="t" style="left:430.00px;top:144.00px;font-size:10.4px;line-height:14px;letter-spacing:-0.271px;">Selection Criteria Name</span>
<div class="ul" style="left:428px;top:156px;width:215px;height:1px;"></div>
<div style="left:643px;top:144px;width:286px;height:13px;background:#fff0a0;border:1px solid #cfcfc0;border-radius:2px;"></div>
<svg style="left:918px;top:145px" width="11" height="11" viewBox="0 0 11 11"><circle cx="5.5" cy="5.5" r="4.5" fill="#eef2f8" stroke="#8fb0dc"/><path d="M3 4h5M3 5.7h5M3 7.4h5" stroke="#7ca0d8" stroke-width=".9"/></svg>
<div class="cb" style="left:431px;top:165px;width:12px;height:12px;"><svg width="10" height="10" viewBox="0 0 10 10"><path d="M1.8 5l2.2 2.6L8.3 2" fill="none" stroke="#111" stroke-width="1.7"/></svg></div>
<span class="t" style="left:448.50px;top:165.00px;font-size:10.4px;line-height:14px;letter-spacing:-1.200px;">BP</span>
<span class="t" style="left:430.00px;top:187.00px;font-size:10.4px;line-height:14px;letter-spacing:-0.658px;">Code</span>
<span class="t" style="left:480.50px;top:187.00px;font-size:10.4px;line-height:14px;letter-spacing:-0.406px;">From</span>
<span class="t" style="left:579.00px;top:187.00px;font-size:10.4px;line-height:14px;letter-spacing:0.150px;">To</span>
<div class="ul" style="left:428px;top:199.5px;width:89px;height:1px;"></div>
<div class="ul" style="left:576px;top:199.5px;width:37px;height:1px;"></div>
<div class="inp" style="left:517px;top:186px;width:56px;height:14px;"></div>
<div class="inp" style="left:613px;top:186px;width:60px;height:14px;"></div>
<span class="t" style="left:430.00px;top:215.00px;font-size:10.4px;line-height:14px;letter-spacing:-0.346px;">Customer Group</span>
<div class="ul" style="left:428px;top:227.5px;width:107px;height:1px;"></div>
<div class="inp" style="left:535px;top:214px;width:139px;height:14px;"><svg style="right:4px;top:3.5px" width="8" height="5" viewBox="0 0 8 5"><path d="M0 0h8L4 4.600z" fill="#1a1a1a"/></svg></div><span class="t" style="left:538.00px;top:215.00px;font-size:10.4px;line-height:14px;letter-spacing:-0.337px;">All</span>
<span class="t" style="left:430.00px;top:240.00px;font-size:10.4px;line-height:14px;letter-spacing:-0.287px;">Vendor Group</span>
<div class="ul" style="left:428px;top:252.5px;width:107px;height:1px;"></div>
<div class="inp" style="left:535px;top:239px;width:139px;height:14px;"><svg style="right:4px;top:3.5px" width="8" height="5" viewBox="0 0 8 5"><path d="M0 0h8L4 4.600z" fill="#1a1a1a"/></svg></div><span class="t" style="left:538.00px;top:240.00px;font-size:10.4px;line-height:14px;letter-spacing:-0.337px;">All</span>
<div class="btn" style="left:428px;top:264px;width:83px;height:18px;"></div><span class="t" style="left:447.36px;top:266.00px;font-size:10.4px;line-height:14px;letter-spacing:-0.309px;">Properties</span>
<div style="left:535px;top:266px;width:139px;height:14px;background:#e4e4e4;border:1px solid #bababa;border-radius:2px;"></div>
<span class="t" style="left:537.50px;top:267.00px;font-size:10.4px;line-height:14px;letter-spacing:-0.060px;">Ignore</span>
<div class="cb" style="left:690px;top:165px;width:12px;height:12px;"><svg width="10" height="10" viewBox="0 0 10 10"><path d="M1.8 5l2.2 2.6L8.3 2" fill="none" stroke="#111" stroke-width="1.7"/></svg></div>
<span class="t" style="left:707.50px;top:165.00px;font-size:10.4px;line-height:14px;letter-spacing:-0.396px;">Accounts</span>
<div class="btn" style="left:783px;top:163px;width:64px;height:18px;"></div><span class="t" style="left:805.70px;top:165.00px;font-size:10.4px;line-height:14px;letter-spacing:-0.406px;">Find</span>
<div class="inp" style="left:864px;top:165.5px;width:62px;height:13.5px;"><svg style="right:4px;top:3.25px" width="8" height="5" viewBox="0 0 8 5"><path d="M0 0h8L4 4.600z" fill="#1a1a1a"/></svg></div><span class="t" style="left:867.00px;top:166.00px;font-size:10.4px;line-height:14px;letter-spacing:-0.322px;">1</span>
<div style="left:687px;top:184px;width:224px;height:104px;background:#e3e3e3;border:1px solid #c2c2c2;"></div>
<div style="left:716px;top:184px;width:1px;height:104px;background:#c6c6c6;"></div>
<div style="left:739px;top:184px;width:1px;height:104px;background:#c6c6c6;"></div>
<div style="left:687px;top:199px;width:224px;height:1px;background:#c2c2c2;"></div>
<div style="left:688px;top:210.5px;width:222px;height:1px;background:#cbcbcb;"></div>
<div style="left:688px;top:221.5px;width:222px;height:1px;background:#cbcbcb;"></div>
<div style="left:688px;top:232.5px;width:222px;height:1px;background:#cbcbcb;"></div>
<div style="left:688px;top:243.5px;width:222px;height:1px;background:#cbcbcb;"></div>
<div style="left:688px;top:254.5px;width:222px;height:1px;background:#cbcbcb;"></div>
<div style="left:688px;top:265.5px;width:222px;height:1px;background:#cbcbcb;"></div>
<div style="left:688px;top:276.5px;width:222px;height:1px;background:#cbcbcb;"></div>
<span class="t" style="left:692.00px;top:187.00px;font-size:9.6px;line-height:12px;letter-spacing:1.656px;">#</span>
<span class="t" style="left:720.60px;top:187.00px;font-size:9.6px;line-height:12px;letter-spacing:-0.016px;">x</span>
<span class="t" style="left:744.80px;top:187.00px;font-size:9.6px;line-height:12px;letter-spacing:0.418px;">Account</span>
<span class="t" style="left:691.50px;top:200.00px;font-size:9.6px;line-height:12px;letter-spacing:-0.158px;">1</span>
<span class="t" style="left:719.00px;top:200.00px;font-size:9.6px;line-height:12px;letter-spacing:-0.065px;">x</span>
<span class="t" style="left:758.80px;top:200.00px;font-size:9.6px;line-height:12px;letter-spacing:-0.415px;">Assets</span>
<svg style="left:741px;top:200.4px" width="12" height="9" viewBox="0 0 12 9"><path d="M.6 3h5.6V.8L11.3 4.5 6.2 8.2V6H.6z" fill="#ffe25a" stroke="#d9a81e" stroke-width=".9"/></svg>
<span class="t" style="left:691.50px;top:211.00px;font-size:9.6px;line-height:12px;letter-spacing:-0.150px;">62</span>
<span class="t" style="left:719.00px;top:211.00px;font-size:9.6px;line-height:12px;letter-spacing:-0.065px;">x</span>
<span class="t" style="left:758.80px;top:211.00px;font-size:9.6px;line-height:12px;letter-spacing:-0.148px;">Liabilities</span>
<svg style="left:741px;top:211.4px" width="12" height="9" viewBox="0 0 12 9"><path d="M.6 3h5.6V.8L11.3 4.5 6.2 8.2V6H.6z" fill="#ffe25a" stroke="#d9a81e" stroke-width=".9"/></svg>
<span class="t" style="left:691.50px;top:222.00px;font-size:9.6px;line-height:12px;letter-spacing:-0.153px;">102</span>
<span class="t" style="left:719.00px;top:222.00px;font-size:9.6px;line-height:12px;letter-spacing:-0.065px;">x</span>
<span class="t" style="left:758.80px;top:222.00px;font-size:9.6px;line-height:12px;letter-spacing:-0.166px;">Equity</span>
<svg style="left:741px;top:222.4px" width="12" height="9" viewBox="0 0 12 9"><path d="M.6 3h5.6V.8L11.3 4.5 6.2 8.2V6H.6z" fill="#ffe25a" stroke="#d9a81e" stroke-width=".9"/></svg>
<span class="t" style="left:691.50px;top:233.00px;font-size:9.6px;line-height:12px;letter-spacing:0.087px;">113</span>
<span class="t" style="left:719.00px;top:233.00px;font-size:9.6px;line-height:12px;letter-spacing:-0.065px;">x</span>
<span class="t" style="left:758.80px;top:233.00px;font-size:9.6px;line-height:12px;letter-spacing:-0.396px;">Revenues</span>
<svg style="left:741px;top:233.4px" width="12" height="9" viewBox="0 0 12 9"><path d="M.6 3h5.6V.8L11.3 4.5 6.2 8.2V6H.6z" fill="#ffe25a" stroke="#d9a81e" stroke-width=".9"/></svg>
<span class="t" style="left:691.50px;top:244.00px;font-size:9.6px;line-height:12px;letter-spacing:-0.153px;">125</span>
<span class="t" style="left:719.00px;top:244.00px;font-size:9.6px;line-height:12px;letter-spacing:-0.065px;">x</span>
<span class="t" style="left:758.80px;top:244.00px;font-size:9.6px;line-height:12px;letter-spacing:-0.276px;">Cost of Sales</span>
<svg style="left:741px;top:244.4px" width="12" height="9" viewBox="0 0 12 9"><path d="M.6 3h5.6V.8L11.3 4.5 6.2 8.2V6H.6z" fill="#ffe25a" stroke="#d9a81e" stroke-width=".9"/></svg>
<span class="t" style="left:691.50px;top:255.00px;font-size:9.6px;line-height:12px;letter-spacing:-0.153px;">140</span>
<span class="t" style="left:719.00px;top:255.00px;font-size:9.6px;line-height:12px;letter-spacing:-0.065px;">x</span>
<span class="t" style="left:758.80px;top:255.00px;font-size:9.6px;line-height:12px;letter-spacing:-0.432px;">Expenses</span>
<svg style="left:741px;top:255.4px" width="12" height="9" viewBox="0 0 12 9"><path d="M.6 3h5.6V.8L11.3 4.5 6.2 8.2V6H.6z" fill="#ffe25a" stroke="#d9a81e" stroke-width=".9"/></svg>
<span class="t" style="left:691.50px;top:266.00px;font-size:9.6px;line-height:12px;letter-spacing:-0.153px;">196</span>
<span class="t" style="left:719.00px;top:266.00px;font-size:9.6px;line-height:12px;letter-spacing:-0.065px;">x</span>
<span class="t" style="left:758.80px;top:266.00px;font-size:9.6px;line-height:12px;letter-spacing:-0.249px;">Financing</span>
<svg style="left:741px;top:266.4px" width="12" height="9" viewBox="0 0 12 9"><path d="M.6 3h5.6V.8L11.3 4.5 6.2 8.2V6H.6z" fill="#ffe25a" stroke="#d9a81e" stroke-width=".9"/></svg>
<span class="t" style="left:691.50px;top:277.00px;font-size:9.6px;line-height:12px;letter-spacing:-0.153px;">219</span>
<span class="t" style="left:719.00px;top:277.00px;font-size:9.6px;line-height:12px;letter-spacing:-0.065px;">x</span>
<span class="t" style="left:758.80px;top:277.00px;font-size:9.6px;line-height:12px;letter-spacing:-0.262px;">Other Revenues and Expenses</span>
<svg style="left:741px;top:277.4px" width="12" height="9" viewBox="0 0 12 9"><path d="M.6 3h5.6V.8L11.3 4.5 6.2 8.2V6H.6z" fill="#ffe25a" stroke="#d9a81e" stroke-width=".9"/></svg>
<svg style="left:911px;top:184px" width="13" height="13" viewBox="0 0 13 13"><path d="M.5.5h12v12" fill="none" stroke="#9bbce6"/><path d="M2 11L10.5 2.5M4.5 2.2h6.3v6.3" fill="none" stroke="#3e86d6" stroke-width="1.7"/></svg>
<div style="left:911px;top:199.5px;width:17px;height:88.5px;background:#f6f6f6;border:1px solid #bcbcbc;"></div>
<div style="left:912.5px;top:201px;width:14px;height:13px;background:#e6e6e6;"><svg width="14" height="13" viewBox="0 0 14 13"><path d="M3 8.5l4-4 4 4z" fill="#c2c2c2"/></svg></div>
<div style="left:912.5px;top:273px;width:14px;height:13px;background:#e6e6e6;"><svg width="14" height="13" viewBox="0 0 14 13"><path d="M3 4.5l4 4 4-4z" fill="#c2c2c2"/></svg></div>
<div class="sep" style="left:428px;top:292.5px;width:501px;height:1px;"></div>
<span class="t" style="left:430.00px;top:302.00px;font-size:10.4px;line-height:14px;letter-spacing:-0.348px;">Selection</span>
<div class="cb" style="left:520px;top:301px;width:12px;height:12px;"><svg width="10" height="10" viewBox="0 0 10 10"><path d="M1.8 5l2.2 2.6L8.3 2" fill="none" stroke="#111" stroke-width="1.7"/></svg></div>
<span class="t" style="left:537.50px;top:301.00px;font-size:10.4px;line-height:14px;letter-spacing:-0.302px;">Posting Date</span>
<span class="t" style="left:648.70px;top:301.00px;font-size:10.4px;line-height:14px;letter-spacing:-0.406px;">From</span>
<span class="t" style="left:756.50px;top:301.00px;font-size:10.4px;line-height:14px;letter-spacing:0.150px;">To</span>
<div class="inp" style="left:687px;top:300.5px;width:55px;height:13.5px;"></div>
<span class="t" style="left:689.50px;top:301.00px;font-size:10.4px;line-height:14px;letter-spacing:-0.008px;">01/01/16</span>
<div class="inp" style="left:787px;top:300.5px;width:55px;height:13.5px;"></div>
<span class="t" style="left:789.50px;top:301.00px;font-size:10.4px;line-height:14px;letter-spacing:-0.008px;">12/31/16</span>
<div class="ul" style="left:646px;top:313.5px;width:41px;height:1px;"></div>
<div class="ul" style="left:742px;top:313.5px;width:45px;height:1px;"></div>
<div class="cb" style="left:520px;top:316px;width:12px;height:12px;"></div>
<span class="t" style="left:537.50px;top:316.00px;font-size:10.4px;line-height:14px;letter-spacing:-0.280px;">Creation Date</span>
<span class="t" style="left:648.70px;top:316.00px;font-size:10.4px;line-height:14px;letter-spacing:-0.406px;">From</span>
<span class="t" style="left:756.50px;top:316.00px;font-size:10.4px;line-height:14px;letter-spacing:0.150px;">To</span>
<div class="inp" style="left:687px;top:315.5px;width:55px;height:13.5px;"></div>
<span class="t" style="left:689.50px;top:316.00px;font-size:10.4px;line-height:14px;letter-spacing:-0.008px;">01/01/16</span>
<div class="inp" style="left:787px;top:315.5px;width:55px;height:13.5px;"></div>
<span class="t" style="left:789.50px;top:316.00px;font-size:10.4px;line-height:14px;letter-spacing:-0.008px;">12/31/16</span>
<div class="ul" style="left:646px;top:328.5px;width:41px;height:1px;"></div>
<div class="ul" style="left:742px;top:328.5px;width:45px;height:1px;"></div>
<div class="cb" style="left:520px;top:331px;width:12px;height:12px;"></div>
<span class="t" style="left:537.50px;top:331.00px;font-size:10.4px;line-height:14px;letter-spacing:-0.268px;">Document Date</span>
<span class="t" style="left:648.70px;top:331.00px;font-size:10.4px;line-height:14px;letter-spacing:-0.406px;">From</span>
<span class="t" style="left:756.50px;top:331.00px;font-size:10.4px;line-height:14px;letter-spacing:0.150px;">To</span>
<div class="inp" style="left:687px;top:330.5px;width:55px;height:13.5px;"></div>
<span class="t" style="left:689.50px;top:331.00px;font-size:10.4px;line-height:14px;letter-spacing:-0.008px;">01/01/16</span>
<div class="inp" style="left:787px;top:330.5px;width:55px;height:13.5px;"></div>
<span class="t" style="left:789.50px;top:331.00px;font-size:10.4px;line-height:14px;letter-spacing:-0.008px;">12/31/16</span>
<div class="ul" style="left:646px;top:343.5px;width:41px;height:1px;"></div>
<div class="btn" style="left:869px;top:326px;width:60px;height:18px;"></div><span class="t" style="left:877.37px;top:328.00px;font-size:10.4px;line-height:14px;letter-spacing:-0.444px;">Expanded</span>
<div class="sep" style="left:428px;top:351px;width:501px;height:1px;"></div>
<span class="t" style="left:430.00px;top:358.00px;font-size:10.4px;line-height:14px;letter-spacing:-0.237px;text-decoration:underline;text-underline-offset:1.5px;">Output Mode</span>
<div class="inp" style="left:526px;top:358.5px;width:80px;height:13.5px;"><svg style="right:4px;top:3.25px" width="8" height="5" viewBox="0 0 8 5"><path d="M0 0h8L4 4.600z" fill="#1a1a1a"/></svg></div><span class="t" style="left:529.00px;top:359.00px;font-size:10.4px;line-height:14px;letter-spacing:-0.266px;">Detailed</span>
<div class="rd" style="left:431px;top:375.2px;width:12px;height:12px;"><svg width="10" height="10" viewBox="0 0 10 10"><circle cx="5" cy="5" r="2.1" fill="#222"/></svg></div>
<span class="t" style="left:448.50px;top:375.00px;font-size:10.4px;line-height:14px;letter-spacing:-0.071px;">No Total</span>
<div class="rd" style="left:431px;top:390.15px;width:12px;height:12px;"></div>
<span class="t" style="left:448.50px;top:390.00px;font-size:10.4px;line-height:14px;letter-spacing:-0.196px;">Month (Posting Date)</span>
<div class="rd" style="left:431px;top:405.1px;width:12px;height:12px;"></div>
<span class="t" style="left:448.50px;top:405.00px;font-size:10.4px;line-height:14px;letter-spacing:-0.099px;">Month (<u>P</u>osting Date) and Original Journal</span>
<div class="rd" style="left:431px;top:420.05px;width:12px;height:12px;"></div>
<span class="t" style="left:448.50px;top:420.00px;font-size:10.4px;line-height:14px;letter-spacing:-0.124px;">Period (Posting Date) and Original Journal</span>
<div class="cb" style="left:648px;top:360.5px;width:12px;height:12px;"></div>
<span class="t" style="left:665.30px;top:360.00px;font-size:10.4px;line-height:14px;letter-spacing:-0.332px;">Display Postings Summary</span>
<div class="cb" style="left:648px;top:375.5px;width:12px;height:12px;"></div>
<span class="t" style="left:665.30px;top:375.00px;font-size:10.4px;line-height:14px;letter-spacing:-0.315px;">Display OB for Periods</span>
<div class="cb" style="left:648px;top:417.5px;width:12px;height:12px;"></div>
<span class="t" style="left:665.30px;top:417.00px;font-size:10.4px;line-height:14px;letter-spacing:-0.110px;">Ignore Ad<u>j</u>ustments</span>
<div class="cb" style="left:648px;top:432.5px;width:12px;height:12px;"></div>
<span class="t" style="left:665.30px;top:432.00px;font-size:10.4px;line-height:14px;letter-spacing:-0.216px;">Display Installments in One Row</span>
<div class="inp" style="left:647px;top:465.5px;width:282px;height:13.5px;"><svg style="right:4px;top:3.25px" width="8" height="5" viewBox="0 0 8 5"><path d="M0 0h8L4 4.600z" fill="#1a1a1a"/></svg></div><span class="t" style="left:650.00px;top:466.00px;font-size:10.4px;line-height:14px;letter-spacing:-0.236px;">Display All Transactions</span>
<div class="sep" style="left:428px;top:505.5px;width:501px;height:1px;"></div>
<span class="t" style="left:430.00px;top:512.00px;font-size:10.4px;line-height:14px;letter-spacing:-0.217px;">Numbering for Detailed Mode</span>
<span class="t" style="left:583.50px;top:512.00px;font-size:10.4px;line-height:14px;letter-spacing:-0.253px;">First Sequential No.</span>
<span class="t" style="left:750.00px;top:512.00px;font-size:10.4px;line-height:14px;letter-spacing:-0.261px;">No. on First Printed Page</span>
<div class="ul" style="left:428px;top:524.5px;width:259px;height:1px;"></div>
<div class="ul" style="left:748px;top:524.5px;width:150px;height:1px;"></div>
<div class="inp" style="left:687px;top:511.5px;width:60px;height:13.5px;"></div>
<span class="t" style="left:690.00px;top:512.00px;font-size:10.4px;line-height:14px;letter-spacing:-0.322px;">1</span>
<div class="inp" style="left:898px;top:511.5px;width:31px;height:13.5px;"></div>
<span class="t" style="left:901.00px;top:512.00px;font-size:10.4px;line-height:14px;letter-spacing:-0.322px;">1</span>
<div class="sep" style="left:428px;top:531.5px;width:501px;height:1px;"></div>
<div class="cb" style="left:431px;top:537px;width:12px;height:12px;"></div>
<span class="t" style="left:448.00px;top:536.00px;font-size:10.4px;line-height:14px;letter-spacing:-0.283px;">Sort</span>
<div class="btn" style="left:428px;top:625px;width:65px;height:18px;"><div style="left:0;top:0;width:8px;height:100%;background:linear-gradient(#f1b431,#f09a2e);"></div></div><span class="t" style="left:454.06px;top:627.00px;font-size:10.4px;line-height:14px;letter-spacing:-1.067px;">OK</span>
<div class="btn" style="left:499px;top:625px;width:65px;height:18px;"></div><span class="t" style="left:517.01px;top:627.00px;font-size:10.4px;line-height:14px;letter-spacing:-0.562px;">Cancel</span>
<div class="btn" style="left:628px;top:625px;width:82px;height:18px;"></div><span class="t" style="left:658.47px;top:627.00px;font-size:10.4px;line-height:14px;letter-spacing:-0.656px;">Save</span>
<div class="btn" style="left:840px;top:625px;width:88px;height:18px;"></div><span class="t" style="left:863.99px;top:627.00px;font-size:10.4px;line-height:14px;letter-spacing:-0.274px;">Select All</span>
<span class="t" style="left:408.00px;top:588.00px;font-size:53px;line-height:60px;letter-spacing:2.406px;color:#303030;font-weight:bold;-webkit-text-stroke:1.5px #303030;opacity:.075;">SoftwareSuggest</span>
<span class="t" style="left:889.00px;top:608.00px;font-size:31px;line-height:36px;letter-spacing:-1.200px;color:#303030;font-weight:bold;-webkit-text-stroke:1px #303030;opacity:.075;">.com</span>
<svg style="left:60px;top:400px" width="380" height="140" viewBox="60 400 380 140"><defs><filter id="sh" x="-10%" y="-10%" width="130%" height="130%"><feGaussianBlur stdDeviation="1.6"/></filter></defs><g transform="translate(3,3)" filter="url(#sh)" opacity=".45"><rect x="83" y="489.5" width="257.5" height="26" fill="none" stroke="#000" stroke-width="2"/><path d="M347 486L412 423" stroke="#000" stroke-width="2"/><path d="M416.5 419l-3.2 10-6.6-6.8z" fill="#000"/></g><rect x="83" y="489.5" width="257.5" height="26" fill="none" stroke="#f01212" stroke-width="1.8"/><path d="M347 486L412 423" stroke="#f01414" stroke-width="1.6"/><path d="M416.6 419l-3.2 10.2-6.8-7z" fill="#f01414"/></svg>
<!-- status bar -->
<div style="left:3px;top:678px;width:1351.5px;height:1px;background:#bdbdbd;"></div>
<div style="left:3px;top:679px;width:1351.5px;height:37px;background:linear-gradient(#dadada 0%,#ececec 18%,#f8f8f8 40%,#fbfbfb 100%);"></div>
<div class="sf" style="left:9px;top:685px;width:571px;height:12.5px;"></div>
<div class="sf" style="left:9px;top:702.3px;width:571px;height:12.5px;"></div>
<div class="sf" style="left:666px;top:685px;width:284.5px;height:12.5px;"></div>
<div class="sf" style="left:666px;top:702.3px;width:284.5px;height:12.5px;"></div>
<div class="sf" style="left:955.5px;top:685px;width:281px;height:12.5px;"></div>
<div class="sf" style="left:955.5px;top:702.3px;width:281px;height:12.5px;"></div>
<span class="t" style="left:602.00px;top:685.00px;font-size:10px;line-height:13px;letter-spacing:-0.117px;">12/26/16</span>
<span class="t" style="left:605.50px;top:703.00px;font-size:10px;line-height:13px;letter-spacing:-0.245px;">5:35PM</span>
<span class="t" style="left:1258.50px;top:686.00px;font-size:23.5px;line-height:26px;letter-spacing:-1.200px;color:#a4a4a4;font-weight:bold;letter-spacing:-4px;-webkit-text-stroke:.6px #a4a4a4;transform:skewX(-6deg);">SAP</span>
<span class="t" style="left:1300.80px;top:687.00px;font-size:10.4px;line-height:14px;letter-spacing:-0.146px;color:#8e8e8e;transform:scaleX(0.86);transform-origin:0 0;">Business</span>
<span class="t" style="left:1300.00px;top:694.00px;font-size:14.5px;line-height:16px;letter-spacing:-0.401px;color:#f0ab1c;font-weight:bold;">One</span>
<svg style="left:1341px;top:705px" width="13" height="12" viewBox="0 0 13 12" fill="#6a6a6a"><rect x="11" y="0" width="1" height="1"/><rect x="11" y="2" width="1" height="1"/><rect x="9" y="2" width="1" height="1"/><rect x="11" y="4" width="1" height="1"/><rect x="9" y="4" width="1" height="1"/><rect x="7" y="4" width="1" height="1"/><rect x="11" y="6" width="1" height="1"/><rect x="9" y="6" width="1" height="1"/><rect x="7" y="6" width="1" height="1"/><rect x="5" y="6" width="1" height="1"/><rect x="11" y="8" width="1" height="1"/><rect x="9" y="8" width="1" height="1"/><rect x="7" y="8" width="1" height="1"/><rect x="5" y="8" width="1" height="1"/><rect x="3" y="8" width="1" height="1"/><rect x="11" y="10" width="1" height="1"/><rect x="9" y="10" width="1" height="1"/><rect x="7" y="10" width="1" height="1"/><rect x="5" y="10" width="1" height="1"/><rect x="3" y="10" width="1" height="1"/><rect x="1" y="10" width="1" height="1"/></svg>
</div>
</body></html>
